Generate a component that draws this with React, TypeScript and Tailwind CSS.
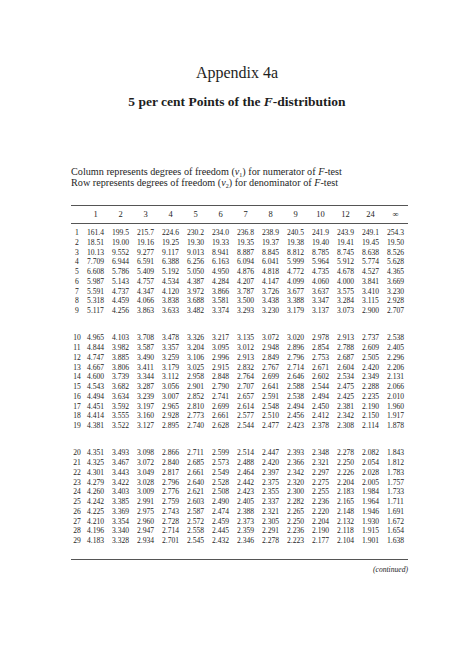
import React from "react";

const heads = ["1", "2", "3", "4", "5", "6", "7", "8", "9", "10", "12", "24", "∞"];

const data: string[] = [
    "161.4 199.5 215.7 224.6 230.2 234.0 236.8 238.9 240.5 241.9 243.9 249.1 254.3",
    "18.51 19.00 19.16 19.25 19.30 19.33 19.35 19.37 19.38 19.40 19.41 19.45 19.50",
    "10.13 9.552 9.277 9.117 9.013 8.941 8.887 8.845 8.812 8.785 8.745 8.638 8.526",
    "7.709 6.944 6.591 6.388 6.256 6.163 6.094 6.041 5.999 5.964 5.912 5.774 5.628",
    "6.608 5.786 5.409 5.192 5.050 4.950 4.876 4.818 4.772 4.735 4.678 4.527 4.365",
    "5.987 5.143 4.757 4.534 4.387 4.284 4.207 4.147 4.099 4.060 4.000 3.841 3.669",
    "5.591 4.737 4.347 4.120 3.972 3.866 3.787 3.726 3.677 3.637 3.575 3.410 3.230",
    "5.318 4.459 4.066 3.838 3.688 3.581 3.500 3.438 3.388 3.347 3.284 3.115 2.928",
    "5.117 4.256 3.863 3.633 3.482 3.374 3.293 3.230 3.179 3.137 3.073 2.900 2.707",
    "4.965 4.103 3.708 3.478 3.326 3.217 3.135 3.072 3.020 2.978 2.913 2.737 2.538",
    "4.844 3.982 3.587 3.357 3.204 3.095 3.012 2.948 2.896 2.854 2.788 2.609 2.405",
    "4.747 3.885 3.490 3.259 3.106 2.996 2.913 2.849 2.796 2.753 2.687 2.505 2.296",
    "4.667 3.806 3.411 3.179 3.025 2.915 2.832 2.767 2.714 2.671 2.604 2.420 2.206",
    "4.600 3.739 3.344 3.112 2.958 2.848 2.764 2.699 2.646 2.602 2.534 2.349 2.131",
    "4.543 3.682 3.287 3.056 2.901 2.790 2.707 2.641 2.588 2.544 2.475 2.288 2.066",
    "4.494 3.634 3.239 3.007 2.852 2.741 2.657 2.591 2.538 2.494 2.425 2.235 2.010",
    "4.451 3.592 3.197 2.965 2.810 2.699 2.614 2.548 2.494 2.450 2.381 2.190 1.960",
    "4.414 3.555 3.160 2.928 2.773 2.661 2.577 2.510 2.456 2.412 2.342 2.150 1.917",
    "4.381 3.522 3.127 2.895 2.740 2.628 2.544 2.477 2.423 2.378 2.308 2.114 1.878",
    "4.351 3.493 3.098 2.866 2.711 2.599 2.514 2.447 2.393 2.348 2.278 2.082 1.843",
    "4.325 3.467 3.072 2.840 2.685 2.573 2.488 2.420 2.366 2.321 2.250 2.054 1.812",
    "4.301 3.443 3.049 2.817 2.661 2.549 2.464 2.397 2.342 2.297 2.226 2.028 1.783",
    "4.279 3.422 3.028 2.796 2.640 2.528 2.442 2.375 2.320 2.275 2.204 2.005 1.757",
    "4.260 3.403 3.009 2.776 2.621 2.508 2.423 2.355 2.300 2.255 2.183 1.984 1.733",
    "4.242 3.385 2.991 2.759 2.603 2.490 2.405 2.337 2.282 2.236 2.165 1.964 1.711",
    "4.225 3.369 2.975 2.743 2.587 2.474 2.388 2.321 2.265 2.220 2.148 1.946 1.691",
    "4.210 3.354 2.960 2.728 2.572 2.459 2.373 2.305 2.250 2.204 2.132 1.930 1.672",
    "4.196 3.340 2.947 2.714 2.558 2.445 2.359 2.291 2.236 2.190 2.118 1.915 1.654",
    "4.183 3.328 2.934 2.701 2.545 2.432 2.346 2.278 2.223 2.177 2.104 1.901 1.638",
];

// blocks of rows as printed: 1-9, 10-19, 20-29
const groups = [
    [0, 9],
    [9, 19],
    [19, 29],
];

const Row: React.FC<{ label: number; values: string[] }> = ({ label, values }) => (
    <div className="grid grid-cols-[12px_repeat(13,25px)] h-[9.75px] leading-[9.75px] text-[7.6px] text-[#1e1e1e]">
        <span className="text-center">{label}</span>
        {values.map((v, i) => (
            <span key={i} className="text-center">{v}</span>
        ))}
    </div>
);

export default function App() {
    return (
        <div className="w-[474px] h-[670px] bg-white font-['Liberation_Serif',serif] text-[#1e1e1e] overflow-hidden">
            <div className="flex flex-col items-center pt-[64px]">
                <h1 className="text-[16px] leading-[18px]">Appendix 4a</h1>
                <h2 className="mt-[12px] text-[13.5px] leading-[16px] font-bold">
                    5 per cent Points of the <i>F</i>-distribution
                </h2>
            </div>

            <div className="ml-[71px] w-[337px]">
                <div className="mt-[56px] text-[10.2px] leading-[11px]">
                    <p>
                        Column represents degrees of freedom (<i>ν</i><sub className="text-[6px]">1</sub>) for numerator of <i>F</i>-test
                    </p>
                    <p>
                        Row represents degrees of freedom (<i>ν</i><sub className="text-[6px]">2</sub>) for denominator of <i>F</i>-test
                    </p>
                </div>

                <div className="mt-[17px] h-px bg-[#555]" />
                <div className="grid grid-cols-[12px_repeat(13,25px)] h-[17px] items-center text-[8.5px]">
                    <span />
                    {heads.map((h) => (
                        <span key={h} className="text-center">{h}</span>
                    ))}
                </div>
                <div className="h-px bg-[#555]" />

                <div className="flex flex-col pt-[4px] gap-[17.5px]">
                    {groups.map(([a, b]) => (
                        <div key={a} className="flex flex-col">
                            {data.slice(a, b).map((r, i) => (
                                <Row key={a + i} label={a + i + 1} values={r.split(" ")} />
                            ))}
                        </div>
                    ))}
                </div>

                <div className="mt-[13px] h-px bg-[#555]" />
                <p className="mt-[5px] text-right text-[7.6px] leading-[9px] italic">(continued)</p>
            </div>
        </div>
    );
}
